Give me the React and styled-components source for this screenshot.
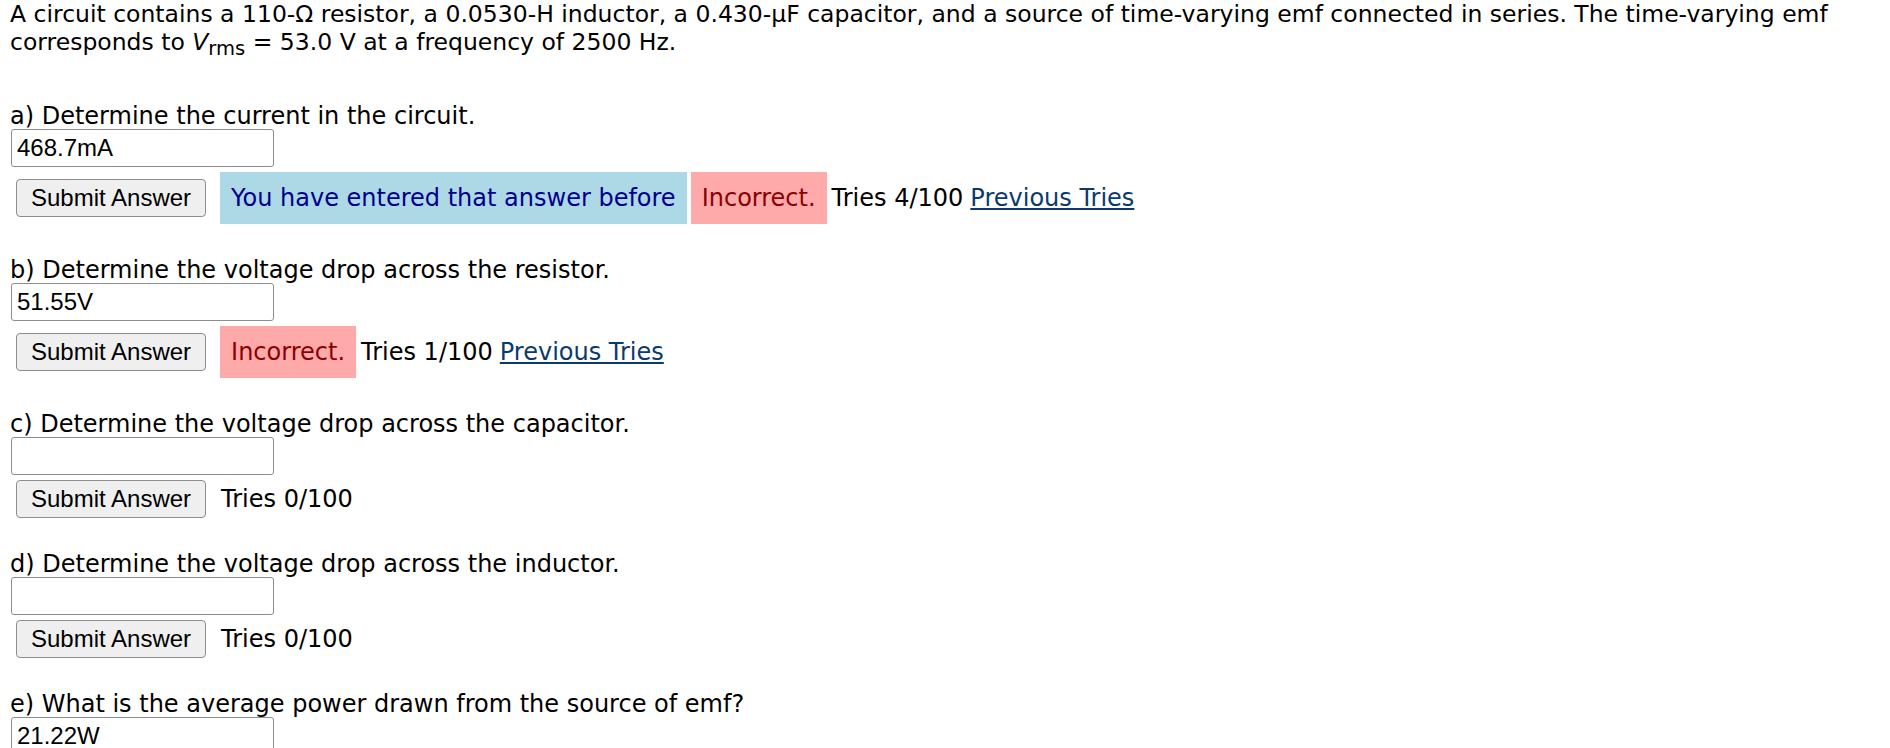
import React from "react";
import styled, { createGlobalStyle } from "styled-components";

const GlobalStyle = createGlobalStyle`
  html, body {
    margin: 0;
    padding: 0;
    background: #ffffff;
  }
  body {
    font-family: "DejaVu Sans", Verdana, sans-serif;
    font-size: 24px;
    color: #000000;
  }
`;

const Page = styled.div`
  padding: 0 0 0 10px;
`;

const Intro = styled.p`
  margin: 0 0 48px;
  font-size: 23.5px;
  line-height: 28px;
`;

const Var = styled.i`
  font-style: italic;
`;

const Sub = styled.sub`
  font-size: 0.83em;
  line-height: 0;
  vertical-align: -0.25em;
`;

const Part = styled.div`
  display: flex;
  flex-direction: column;
  align-items: flex-start;
  margin-top: 34px;
`;

const Prompt = styled.div`
  line-height: 25px;
`;

const AnswerInput = styled.input`
  box-sizing: border-box;
  width: 263px;
  height: 38px;
  margin: 0 0 0 1px;
  padding: 0 5px;
  border: 1px solid #8e8e8e;
  border-radius: 3px;
  background: #ffffff;
  font-family: "Liberation Sans", Arial, sans-serif;
  font-size: 24px;
  color: #000000;
  outline: none;
`;

const Controls = styled.div`
  display: flex;
  align-items: center;
  margin-top: 5px;
  line-height: 24px;
`;

const SubmitButton = styled.button`
  box-sizing: border-box;
  height: 38px;
  margin: 0 14px 0 6px;
  padding: 0 14px;
  border: 1px solid #8e8e8e;
  border-radius: 4px;
  background: #efefef;
  font-family: "Liberation Sans", Arial, sans-serif;
  font-size: 24px;
  color: #000000;
  cursor: pointer;
`;

const tones = {
  previous: { bg: "#add8e6", fg: "#00008b" },
  wrong: { bg: "#ffaaaa", fg: "#8b0000" },
};

const Status = styled.span`
  margin-right: 4px;
  padding: 14px 11px;
  background: ${(p) => tones[p.$tone].bg};
  color: ${(p) => tones[p.$tone].fg};
`;

const Tries = styled.span`
  margin-left: 1px;
`;

const PrevLink = styled.a`
  margin-left: 7px;
  color: #0b3a6e;
  text-decoration: underline;
  cursor: pointer;
`;

const parts = [
  {
    id: "a",
    prompt: "a) Determine the current in the circuit.",
    value: "468.7mA",
    status: ["previous", "wrong"],
    tries: 4,
  },
  {
    id: "b",
    prompt: "b) Determine the voltage drop across the resistor.",
    value: "51.55V",
    status: ["wrong"],
    tries: 1,
  },
  {
    id: "c",
    prompt: "c) Determine the voltage drop across the capacitor.",
    value: "",
    status: [],
    tries: 0,
  },
  {
    id: "d",
    prompt: "d) Determine the voltage drop across the inductor.",
    value: "",
    status: [],
    tries: 0,
  },
  {
    id: "e",
    prompt: "e) What is the average power drawn from the source of emf?",
    value: "21.22W",
    status: [],
    tries: 0,
    last: true,
  },
];

const statusText = {
  previous: "You have entered that answer before",
  wrong: "Incorrect.",
};

const App = () => {
  return (
    <Page>
      <GlobalStyle />
      <Intro>
        A circuit contains a 110-Ω resistor, a 0.0530-H inductor, a
        0.430-μF capacitor, and a source of time-varying emf connected in
        series. The time-varying emf corresponds to <Var>V</Var>
        <Sub>rms</Sub> = 53.0 V at a frequency of 2500 Hz.
      </Intro>
      {parts.map((part) => (
        <Part key={part.id}>
          <Prompt>{part.prompt}</Prompt>
          <AnswerInput type="text" defaultValue={part.value} />
          {!part.last && (
            <Controls>
              <SubmitButton type="button">Submit Answer</SubmitButton>
              {part.status.map((s) => (
                <Status key={s} $tone={s}>
                  {statusText[s]}
                </Status>
              ))}
              <Tries>Tries {part.tries}/100</Tries>
              {part.tries > 0 && <PrevLink>Previous Tries</PrevLink>}
            </Controls>
          )}
        </Part>
      ))}
    </Page>
  );
};

export default App;
